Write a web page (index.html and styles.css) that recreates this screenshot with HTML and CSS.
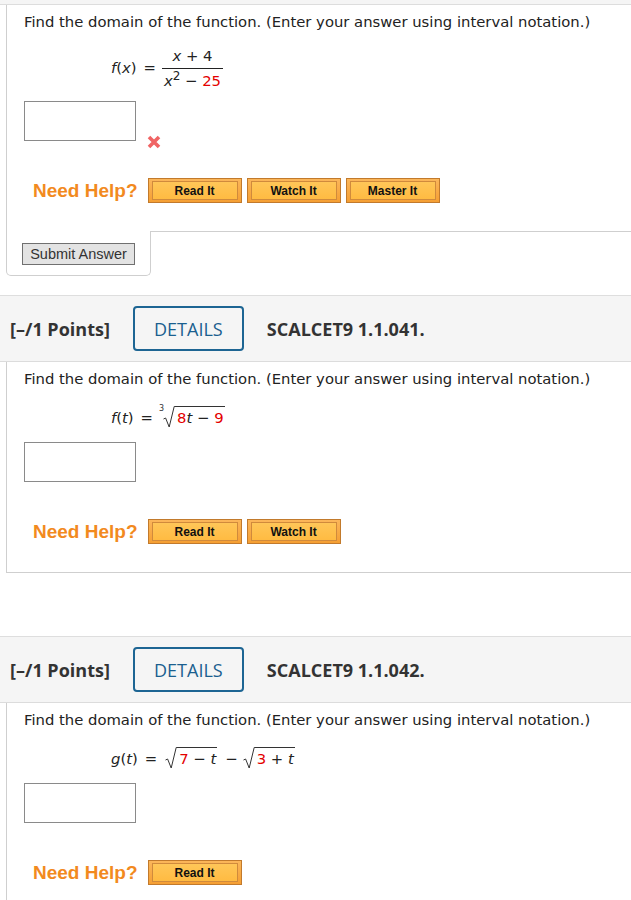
FILE: index.html
```html
<!DOCTYPE html>
<html>
<head>
<meta charset="utf-8">
<link rel="stylesheet" href="styles.css">
</head>
<body>
<div class="topband"></div>

<div class="question">
  <div class="qbody first">
    <p class="prompt">Find the domain of the function. (Enter your answer using interval notation.)</p>
    <div class="math math-tall">
      <span class="fn"><i>f</i>(<i>x</i>)</span>
      <span class="eq">=</span>
      <span class="frac">
        <span class="num"><i>x</i> + 4</span>
        <span class="den"><i>x</i><sup>2</sup> − <span class="red">25</span></span>
      </span>
    </div>
    <div class="answer-row">
      <input class="answer" type="text">
      <svg class="wrong" width="14" height="14" viewBox="0 0 14 14"><path d="M2 2 L12 12 M12 2 L2 12" stroke="#f06464" stroke-width="3.6" fill="none"/></svg>
    </div>
    <div class="help">
      <span class="need">Need Help?</span>
      <span class="hbtn"><span>Read It</span></span>
      <span class="hbtn"><span>Watch It</span></span>
      <span class="hbtn"><span>Master It</span></span>
    </div>
  </div>
  <div class="submit-tab"><button class="submit">Submit Answer</button></div>
</div>

<div class="qheader">
  <span class="points">[–/1 Points]</span>
  <span class="details">DETAILS</span>
  <span class="code">SCALCET9 1.1.041.</span>
</div>
<div class="question">
  <div class="qbody">
    <p class="prompt">Find the domain of the function. (Enter your answer using interval notation.)</p>
    <div class="math">
      <span class="fn"><i>f</i>(<i>t</i>)</span>
      <span class="eq">=</span>
      <span class="root cube">
        <span class="idx">3</span>
        <svg class="rsign" width="12" height="22" viewBox="0 0 12 22"><path d="M0.5 13 L2.6 12 L6.2 21 L11.2 0.5 L12 0.5" stroke="#333" stroke-width="1" fill="none"/></svg>
        <span class="radicand"><span class="red">8</span><i>t</i> − <span class="red">9</span></span>
      </span>
    </div>
    <div class="answer-row">
      <input class="answer" type="text">
    </div>
    <div class="help">
      <span class="need">Need Help?</span>
      <span class="hbtn"><span>Read It</span></span>
      <span class="hbtn"><span>Watch It</span></span>
    </div>
  </div>
</div>

<div class="qheader">
  <span class="points">[–/1 Points]</span>
  <span class="details">DETAILS</span>
  <span class="code">SCALCET9 1.1.042.</span>
</div>
<div class="question">
  <div class="qbody">
    <p class="prompt">Find the domain of the function. (Enter your answer using interval notation.)</p>
    <div class="math">
      <span class="fn"><i>g</i>(<i>t</i>)</span>
      <span class="eq">=</span>
      <span class="root">
        <svg class="rsign" width="12" height="22" viewBox="0 0 12 22"><path d="M0.5 13 L2.6 12 L6.2 21 L11.2 0.5 L12 0.5" stroke="#333" stroke-width="1" fill="none"/></svg>
        <span class="radicand"><span class="red">7</span> − <i>t</i></span>
      </span>
      <span class="op">−</span>
      <span class="root">
        <svg class="rsign" width="12" height="22" viewBox="0 0 12 22"><path d="M0.5 13 L2.6 12 L6.2 21 L11.2 0.5 L12 0.5" stroke="#333" stroke-width="1" fill="none"/></svg>
        <span class="radicand"><span class="red">3</span> + <i>t</i></span>
      </span>
    </div>
    <div class="answer-row">
      <input class="answer" type="text">
    </div>
    <div class="help">
      <span class="need">Need Help?</span>
      <span class="hbtn"><span>Read It</span></span>
    </div>
  </div>
</div>
</body>
</html>
```

FILE: styles.css
```css
html, body {
  margin: 0;
  padding: 0;
  background: #fff;
}
body {
  width: 631px;
  overflow: hidden;
  font-family: "DejaVu Sans", sans-serif;
  font-size: 14.8px;
  color: #222;
}

.topband {
  height: 4px;
  background: #f5f5f5;
  border-bottom: 1px solid #dddddd;
}

.question {
  margin-left: 6px;
  margin-bottom: 63px;
}
.question:has(.submit-tab) {
  margin-bottom: 19px;
}

.qbody {
  border-left: 1px solid #cfcfcf;
  border-bottom: 1px solid #cfcfcf;
  padding: 7px 0 28px 17px;
  display: flex;
  flex-direction: column;
}

.prompt {
  margin: 0;
  line-height: 20px;
  height: 20px;
  white-space: nowrap;
}

.math {
  margin-top: 14px;
  margin-left: 87px;
  height: 28px;
  display: flex;
  align-items: center;
  white-space: nowrap;
}
.math-tall {
  margin-top: 13px;
  height: 45px;
}
.math i {
  font-style: italic;
}
.fn {
  margin-right: 7px;
}
.eq {
  margin-right: 6px;
}
.op {
  margin: 0 3px 0 8px;
}
.red {
  color: #e40000;
}

.frac {
  display: inline-flex;
  flex-direction: column;
  align-items: center;
}
.frac .num {
  padding: 0 2px 3px;
  line-height: 19px;
  border-bottom: 1px solid #222;
  align-self: stretch;
  text-align: center;
}
.frac .den {
  padding: 2px 2px 0;
  line-height: 19px;
}
.frac sup {
  font-size: 12px;
  line-height: 0;
  vertical-align: 6px;
}

.root {
  display: inline-flex;
  align-items: flex-start;
  margin-left: 2px;
}
.root.cube {
  margin-left: 0;
}
.idx {
  font-size: 8px;
  line-height: 8px;
  margin-top: -1px;
  margin-right: -1px;
  color: #333;
}
.rsign {
  display: block;
  flex: none;
}
.radicand {
  border-top: 1px solid #333;
  line-height: 20px;
  height: 21px;
  padding: 1px 1px 0 2px;
  box-sizing: border-box;
}

.answer-row {
  margin-top: 11px;
  display: flex;
  align-items: flex-end;
}
.answer {
  box-sizing: border-box;
  width: 112px;
  height: 40px;
  margin: 0;
  padding: 0;
  border: 1px solid #8a8a8a;
  background: #fff;
}
.wrong {
  display: block;
  margin-left: 11px;
  margin-bottom: -8px;
}

.help {
  margin-top: 37px;
  margin-left: 9px;
  display: flex;
  align-items: center;
  height: 25px;
}
.need {
  font-family: "Liberation Sans", Arial, sans-serif;
  font-weight: bold;
  font-size: 19px;
  color: #f28a1e;
  margin-right: 10px;
}
.hbtn {
  box-sizing: border-box;
  width: 94px;
  height: 25px;
  display: flex;
  padding: 2px 3px;
  margin-right: 5px;
  border: 1px solid #c27a2c;
  background: linear-gradient(#fbb65a, #f59f33);
}
.hbtn span {
  flex: 1;
  display: flex;
  align-items: center;
  justify-content: center;
  border: 1px solid #d08a3c;
  background: linear-gradient(#ffc658, #ffbb42);
  font-family: "Liberation Sans", Arial, sans-serif;
  font-weight: bold;
  font-size: 12px;
  color: #111;
}

.submit-tab {
  box-sizing: border-box;
  width: 145px;
  height: 45px;
  margin-top: -1px;
  background: #fff;
  border: 1px solid #cfcfcf;
  border-top: none;
  border-radius: 0 0 5px 5px;
  padding: 12px 0 0 15px;
}
.submit {
  box-sizing: border-box;
  width: 113px;
  height: 22px;
  margin: 0;
  padding: 0;
  border: 1px solid #707070;
  background: #e3e3e3;
  font-family: "Liberation Sans", Arial, sans-serif;
  font-size: 14.5px;
  color: #333;
}

.qheader {
  box-sizing: border-box;
  height: 67px;
  background: #f5f5f5;
  border-top: 1px solid #dedede;
  border-bottom: 1px solid #dcdcdc;
  display: flex;
  align-items: center;
  padding-left: 10px;
  gap: 23px;
  font-family: "Open Sans", sans-serif;
  font-size: 18px;
}
.points, .code {
  font-weight: bold;
  color: #333;
}
.details {
  box-sizing: border-box;
  width: 111px;
  height: 45px;
  border: 2px solid #1d6593;
  border-radius: 4px;
  display: flex;
  align-items: center;
  justify-content: center;
  color: #1b5f8f;
}
```
